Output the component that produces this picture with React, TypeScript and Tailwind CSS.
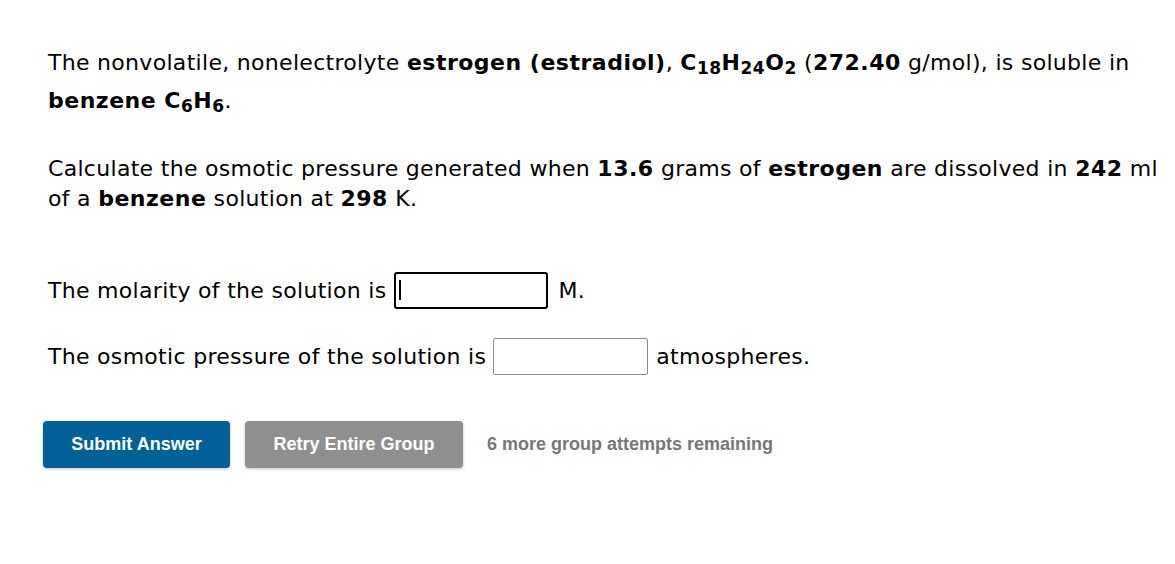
import React from 'react';

const Sub: React.FC<{ children: React.ReactNode }> = ({ children }) => (
  <sub className="text-[17px] font-bold relative top-[4px]">{children}</sub>
);

const B: React.FC<{ children: React.ReactNode }> = ({ children }) => (
  <b className="tracking-[0.5px]">{children}</b>
);

export default function App() {
  return (
    <div className="min-h-screen bg-white pl-12 pr-4 pt-[44px] text-black font-['Verdana','DejaVu_Sans',sans-serif] text-[22px] tracking-[0.3px]">
      <p className="leading-[38px]">
        The nonvolatile, nonelectrolyte <B>estrogen (estradiol)</B>, <B>C<Sub>18</Sub>H<Sub>24</Sub>O<Sub>2</Sub></B> (<B>272.40</B> g/mol), is soluble in{' '}
        <B>benzene C<Sub>6</Sub>H<Sub>6</Sub></B>.
      </p>

      <p className="mt-[34px] leading-[30px]">
        Calculate the osmotic pressure generated when <B>13.6</B> grams of <B>estrogen</B> are dissolved in <B>242</B> ml of a <B>benzene</B> solution at <B>298</B> K.
      </p>

      <div className="mt-[58px] flex items-center h-[36px]">
        <span>The molarity of the solution is</span>
        <div className="ml-[8px] w-[154px] h-[37px] border-2 border-black rounded-[3px] flex items-center pl-[3px]">
          <span className="w-[2px] h-[20px] bg-black" />
        </div>
        <span className="ml-[10px]">M.</span>
      </div>

      <div className="mt-[30px] flex items-center h-[36px]">
        <span>The osmotic pressure of the solution is</span>
        <div className="ml-[7px] w-[155px] h-[37px] border border-[#8a8a8a] rounded-[2px]" />
        <span className="ml-[8px]">atmospheres.</span>
      </div>

      <div className="mt-[47px] -ml-[5px] flex items-center font-['Liberation_Sans',Arial,sans-serif] font-bold text-[18px] tracking-normal">
        <button className="w-[187px] h-[47px] rounded-[4px] bg-[#006199] text-white shadow-[0_1px_3px_rgba(0,0,0,0.25)]">
          Submit Answer
        </button>
        <button className="ml-[15px] w-[218px] h-[47px] rounded-[4px] bg-[#8f8f8f] text-white shadow-[0_1px_3px_rgba(0,0,0,0.25)]">
          Retry Entire Group
        </button>
        <span className="ml-[24px] text-[#777777]">6 more group attempts remaining</span>
      </div>
    </div>
  );
}
